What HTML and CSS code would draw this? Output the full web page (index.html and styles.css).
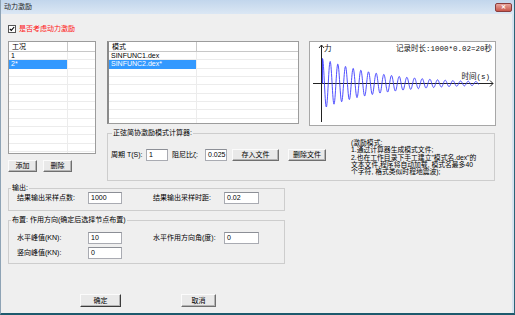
FILE: index.html
```html
<!DOCTYPE html>
<html lang="zh">
<head>
<meta charset="utf-8">
<title>动力激励</title>
<link rel="stylesheet" href="styles.css">
</head>
<body>
<div class="window">
  <div class="titlebar">
    <span class="title">动力激励</span>
    <span class="close">✕</span>
  </div>
  <div class="client">
    <div class="chk-row">
      <span class="chk"><svg width="6" height="6" viewBox="0 0 6 6"><path d="M0.8 2.8 L2.3 4.4 L5.2 1.0" fill="none" stroke="#000" stroke-width="1.1"/></svg></span>
      <span class="chk-label">是否考虑动力激励</span>
    </div>

    <div class="top">
      <div class="left-col">
        <div class="list list-left">
          <div class="lh"><div class="hc c1">工况</div><div class="hc"></div></div>
          <div class="lb">
            <div class="row"><span class="cell">1</span></div>
            <div class="row sel"><span class="cell">2*</span></div>
          </div>
        </div>
        <div class="btnrow">
          <button class="btn b-small">添加</button>
          <button class="btn b-small">删除</button>
        </div>
      </div>

      <div class="right-col">
        <div class="upper">
          <div class="list list-mid">
            <div class="lh"><div class="hc c1">模式</div><div class="hc"></div></div>
            <div class="lb">
              <div class="row"><span class="cell">SINFUNC1.dex</span></div>
              <div class="row sel"><span class="cell">SINFUNC2.dex*</span></div>
            </div>
          </div>
          <div class="graph">
            <svg width="185" height="83" viewBox="310 41 185 83">
              <g stroke="#222" stroke-width="1" fill="none">
                <line x1="321.5" y1="44" x2="321.5" y2="121"/>
                <polyline points="319,47 321.5,44 324,47"/>
                <line x1="313" y1="82.5" x2="493" y2="82.5"/>
                <polyline points="490,79.5 493,82.5 490,85.5"/>
              </g>
              <polyline id="wave" fill="none" stroke="#3b3bff" stroke-width="0.9" points=""/>
              <text class="gt" x="324" y="49.5">力</text>
              <text class="gt" x="492" y="49.5" text-anchor="end">记录时长:1000*0.02=20秒</text>
              <text class="gt" x="490" y="78" text-anchor="end">时间(s)</text>
            </svg>
          </div>
        </div>

        <fieldset class="group calc">
          <legend>正弦简协激励模式计算器:</legend>
          <div class="calc-row">
            <span class="lbl l-t">周期 T(S):</span>
            <span class="inp i-s">1</span>
            <span class="lbl l-z">阻尼比ζ:</span>
            <span class="inp i-s">0.025</span>
            <button class="btn b-save">存入文件</button>
            <button class="btn b-del">删除文件</button>
            <div class="note">(激励模式:<br>1.通过计算器生成模式文件;<br>2.也在工作目录下手工建立"模式名.dex"的<br>文本文件,程序将自动加载, 模式名最多40<br>个字符, 格式类似时程地震波);</div>
          </div>
        </fieldset>
      </div>
    </div>

    <fieldset class="group out">
      <legend>输出:</legend>
      <div class="form-grid">
        <span class="lbl">结果输出采样点数:</span>
        <span class="inp">1000</span>
        <span></span>
        <span class="lbl">结果输出采样时距:</span>
        <span class="inp">0.02</span>
      </div>
    </fieldset>

    <fieldset class="group place">
      <legend>布置: 作用方向(确定后选择节点布置)</legend>
      <div class="form-grid">
        <span class="lbl">水平峰值(KN):</span>
        <span class="inp">10</span>
        <span></span>
        <span class="lbl">水平作用方向角(度):</span>
        <span class="inp">0</span>
        <span class="lbl">竖向峰值(KN):</span>
        <span class="inp">0</span>
      </div>
    </fieldset>

    <div class="actions">
      <button class="btn b-ok">确定</button>
      <button class="btn b-cancel">取消</button>
    </div>
  </div>
</div>
<script src="script.js"></script>
</body>
</html>
```

FILE: styles.css
```css
* { box-sizing: border-box; }
html, body { margin: 0; padding: 0; }
body {
  width: 515px;
  height: 315px;
  overflow: hidden;
  font-family: "Liberation Sans", "Noto Sans CJK SC", sans-serif;
  font-size: 7px;
  line-height: 8px;
  color: #000;
  background: #efefef;
}
.window {
  width: 515px;
  height: 315px;
  display: flex;
  flex-direction: column;
  border-left: 1px solid #8ea3b5;
  border-right: 1px solid #2b6477;
  border-bottom: 2px solid #1d5a6d;
  background: #efefef;
}
.titlebar {
  height: 14px;
  flex: none;
  display: flex;
  align-items: center;
  justify-content: space-between;
  padding: 0 2px 0 3px;
  background: linear-gradient(#c2d6ec, #dbe7f4);
  color: #1e1e1e;
}
.title { font-size: 7px; }
.close {
  width: 17px;
  height: 9px;
  margin-top: 1px;
  border: 1px solid #8a3d3d;
  border-radius: 2px;
  background: linear-gradient(#e7a59d, #c9564a);
  color: #fff;
  font-size: 6px;
  line-height: 7px;
  text-align: center;
  font-weight: bold;
}
.client {
  flex: 1;
  padding: 0 0 0 7px;
  border-right: 2px solid #d6e3f0;
}
.chk-row {
  margin-top: 11px;
  height: 7px;
  display: flex;
  align-items: center;
  gap: 4px;
}
.chk {
  width: 6px;
  height: 6px;
  outline: 1px solid #555;
  background: #fff;
  margin-left: 1px;
  display: flex;
}
.chk-label { color: #ff1010; font-size: 7px; }

.top {
  margin-top: 9px;
  display: flex;
  gap: 11px;
}
.left-col { width: 88px; }
.right-col { width: 389px; }

.list {
  border: 1px solid #9c9c9c;
  background: #fff;
  display: flex;
  flex-direction: column;
  overflow: hidden;
}
.list-left { height: 113px; }
.list-mid { width: 192px; height: 83px; border-left: 2px solid #8a8a8a; }
.lh {
  height: 10px;
  flex: none;
  display: flex;
  border-bottom: 1px solid #c8c8c8;
}
.hc { padding: 1px 0 0 3px; font-size: 7px; flex: 1; }
.hc.c1 { flex: none; border-right: 1px solid #c8c8c8; }
.list-left .hc.c1 { width: 59px; }
.list-mid .hc.c1 { width: 88px; }
.lb { flex: 1; }
.list-left .lb { background-image: linear-gradient(to right, transparent 58px, #ececec 58px, #ececec 59px, transparent 59px), repeating-linear-gradient(to bottom, transparent 0, transparent 7.33px, #ececec 7.33px, #ececec 8.33px); }
.list-mid .lb { background-image: linear-gradient(to right, transparent 87px, #ececec 87px, #ececec 88px, transparent 88px), repeating-linear-gradient(to bottom, transparent 0, transparent 7.33px, #ececec 7.33px, #ececec 8.33px); }
.row { height: 8.33px; display: flex; }
.cell { padding-left: 2px; line-height: 8px; }
.list-left .cell { width: 58px; }
.list-mid .cell { width: 87px; }
.row.sel .cell { background: #3399ff; color: #fff; }

.btnrow { margin-top: 6px; display: flex; gap: 6px; }

.btn {
  font-family: "Liberation Sans", "Noto Sans CJK SC", sans-serif;
  font-size: 7px;
  line-height: 8px;
  height: 12px;
  padding: 0;
  margin: 0;
  background: #e9e9e9;
  color: #000;
  border: 1px solid;
  border-color: #fbfbfb #6f6f6f #6f6f6f #fbfbfb;
  box-shadow: inset -1px -1px 0 #b4b4b4;
}
.b-small { width: 29px; }

.upper { display: flex; gap: 10px; align-items: flex-start; height: 85px; }
.graph {
  width: 187px;
  height: 85px;
  border: 1px solid #a7a7a7;
  background: #fff;
}
.graph svg { display: block; }
.gt { font-family: "Liberation Mono", "Noto Sans CJK SC", monospace; font-size: 7.5px; fill: #111; }

.group {
  margin: 0;
  padding: 0;
  border: 1px solid #cdcdcd;
  min-width: 0;
}
.group legend {
  padding: 0 1px;
  margin-left: 2px;
  font-size: 7px;
  line-height: 8px;
  height: 8px;
}
.calc { margin-top: 3px; width: 388px; height: 52px; }
.calc legend { margin-left: 4px; }
.calc-row { display: flex; align-items: flex-start; padding-left: 3px; }
.lbl { white-space: nowrap; }
.calc-row .lbl, .calc-row .inp, .calc-row .btn { margin-top: 12px; }
.calc-row .lbl { line-height: 12px; }
.l-t { width: 35px; }
.l-z { width: 33px; margin-left: 4px; }
.inp {
  display: block;
  height: 12px;
  background: #fff;
  border: 1px solid #a9abb2;
  border-top-color: #8c8f96;
  padding: 0 2px;
  line-height: 10px;
  font-size: 7px;
}
.i-s { width: 22px; }
.b-save { width: 47px; margin-left: 5px; }
.b-del { width: 38px; margin-left: 9px; }
.note {
  margin-left: 25px;
  margin-top: 2px;
  width: 142px;
  font-size: 6.8px;
  line-height: 7.3px;
  white-space: nowrap;
}

.out { margin-top: 3px; width: 277px; height: 27px; }
.out .form-grid { padding-left: 8px; }
.place { margin-top: 5px; width: 277px; height: 48px; }
.place .form-grid { padding: 8px 0 0 8px; }
.form-grid {
  display: grid;
  grid-template-columns: 71px 34px 31px 71px 35px;
  grid-auto-rows: 12px;
  row-gap: 3px;
  align-items: center;
}
.form-grid .lbl { line-height: 12px; }

.actions {
  margin-top: 30px;
  display: flex;
  padding-left: 72px;
}
.b-ok { width: 41px; height: 13px; border-color: #fbfbfb #3c3c3c #3c3c3c #fbfbfb; }
.b-cancel { width: 35px; height: 13px; margin-left: 60px; }
```

FILE: script.js
```js
(function () {
  var pts = ['322.5,82.5'];
  for (var t = 0; t <= 156; t += 0.25) {
    var x = 322.5 + t;
    var a = 25 * Math.exp(-0.0165 * t);
    var y = 82.5 - a * Math.cos(2 * Math.PI * t / 7.67);
    pts.push(x.toFixed(2) + ',' + y.toFixed(2));
  }
  document.getElementById('wave').setAttribute('points', pts.join(' '));
})();
```
